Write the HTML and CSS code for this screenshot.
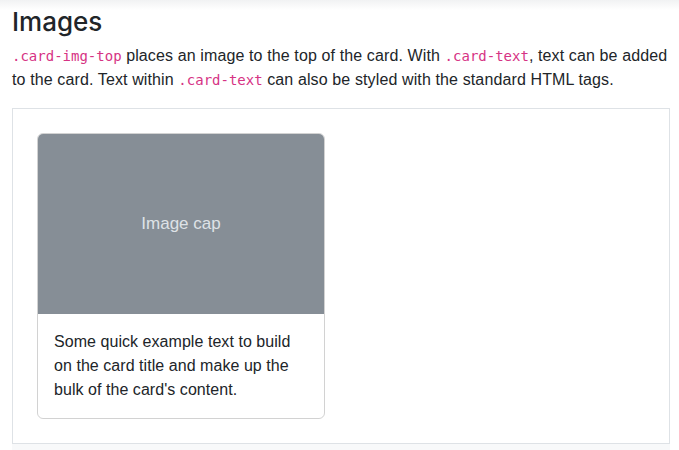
FILE: index.html
```html
<!DOCTYPE html>
<html>
<head>
<meta charset="utf-8">
<link rel="stylesheet" href="styles.css">
</head>
<body>
<div class="topshade"></div>
<main class="content">
  <h3 class="title">Images</h3>
  <p class="lead-text"><code>.card-img-top</code> places an image to the top of the card. With <code>.card-text</code>, text can be added to the card. Text within <code>.card-text</code> can also be styled with the standard HTML tags.</p>
  <div class="example">
    <div class="card">
      <div class="card-img">Image cap</div>
      <div class="card-body">
        <p class="card-text">Some quick example text to build on the card title and make up the bulk of the card's content.</p>
      </div>
    </div>
  </div>
  <div class="highlight"></div>
</main>
</body>
</html>
```
FILE: styles.css
```css
* { box-sizing: border-box; }
html, body { margin: 0; padding: 0; background: #fff; }
body {
  font-family: "Liberation Sans", Arial, sans-serif;
  font-size: 16px;
  line-height: 1.5;
  color: #212529;
  position: relative;
  overflow: hidden;
  height: 450px;
}
.topshade {
  position: absolute;
  top: 0; left: 0; right: 0;
  height: 10px;
  background: linear-gradient(#f1f2f3, rgba(255,255,255,0));
}
.content {
  padding: 0 9px 0 12px;
  position: relative;
}
.title {
  margin: 0;
  padding-top: 6px;
  font-family: Inter, "Liberation Sans", sans-serif;
  font-size: 26px;
  font-weight: 500;
  line-height: 1.2;
}
.lead-text {
  margin: 7px 0 16px;
  letter-spacing: 0.12px;
}
code {
  font-family: "DejaVu Sans Mono", monospace;
  font-size: 14px;
  line-height: 1;
  letter-spacing: 0;
  color: #d63384;
}
.example {
  border: 1px solid #dee2e6;
  padding: 24px;
}
.card {
  width: 288px;
  border: 1px solid rgba(0,0,0,.175);
  border-radius: 6px;
  overflow: hidden;
}
.card-img {
  height: 180px;
  background: #868e96;
  color: #dee2e6;
  display: flex;
  align-items: center;
  justify-content: center;
  font-size: 17px;
}
.card-body { padding: 16px; }
.card-text { margin: 0; letter-spacing: 0.05px; }
.highlight {
  height: 40px;
  background: #f8f9fa;
}
```
